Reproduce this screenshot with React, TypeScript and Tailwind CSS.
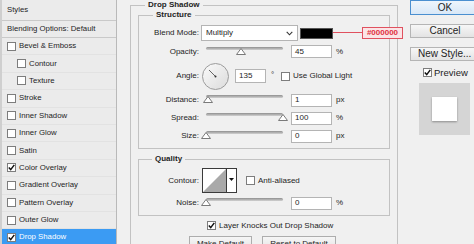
import React from 'react';

const Check = ({ checked, className = '' }: { checked?: boolean; className?: string }) => (
  <span className={`flex h-[9px] w-[9px] shrink-0 items-center justify-center border border-[#7d7d7d] bg-white ${className}`}>
    {checked && (
      <svg width="7" height="7" viewBox="0 0 7 7">
        <path d="M0.8 3.6 L2.7 5.6 L6.3 0.9" stroke="#111" strokeWidth="1.5" fill="none" />
      </svg>
    )}
  </span>
);

const Slider = ({ value }: { value: number }) => (
  <div className="relative ml-[7px] h-[12px] w-[77px] shrink-0">
    <div className="absolute left-0 right-0 top-[1px] h-[3px] rounded-full bg-gradient-to-b from-[#8f8f8f] to-[#d2d2d2]" />
    <svg className="absolute top-[2px]" style={{ left: (value * 77) / 100 - 5 }} width="10" height="7" viewBox="0 0 10 7">
      <path d="M5 0.5 L9.5 6.5 L0.5 6.5 Z" fill="#fff" stroke="#7a7a7a" />
    </svg>
  </div>
);

const NumField = ({ value, unit, w = 'w-[41px]' }: { value: string; unit?: string; w?: string }) => (
  <>
    <div className={`ml-[8px] flex h-[13px] ${w} shrink-0 items-center border border-[#b4b4b4] bg-white pl-[3px]`}>{value}</div>
    {unit && <span className="ml-[4px]">{unit}</span>}
  </>
);

const Label = ({ children }: { children: React.ReactNode }) => (
  <span className="w-[60px] shrink-0 text-right">{children}</span>
);

const styles: { name: string; checked?: boolean; indent?: boolean; active?: boolean }[] = [
  { name: 'Bevel & Emboss' },
  { name: 'Contour', indent: true },
  { name: 'Texture', indent: true },
  { name: 'Stroke' },
  { name: 'Inner Shadow' },
  { name: 'Inner Glow' },
  { name: 'Satin' },
  { name: 'Color Overlay', checked: true },
  { name: 'Gradient Overlay' },
  { name: 'Pattern Overlay' },
  { name: 'Outer Glow' },
  { name: 'Drop Shadow', checked: true, active: true },
];

export default function App() {
  return (
    <div className="relative flex h-[244px] w-[474px] overflow-hidden bg-[#f0f0f0] font-['Liberation_Sans',Arial,sans-serif] text-[8px] leading-[10px] text-[#1e1e1e]">
      {/* styles list */}
      <div className="flex w-[117px] shrink-0 bg-[#cfcfcf] pl-[2px]">
        <div className="flex flex-1 flex-col border-r border-[#b9b9b9] bg-[#ebebeb] text-[7.8px]">
          <div className="flex h-[21px] shrink-0 items-center border-b border-[#c9c9c9] pl-[5px]">Styles</div>
          <div className="flex h-[17px] shrink-0 items-center border-b border-[#c9c9c9] pl-[5px]">Blending Options: Default</div>
          {styles.map((s) => (
            <div
              key={s.name}
              className={`flex h-[17.4px] shrink-0 items-center border-b border-[#e2e2e2] ${s.indent ? 'pl-[15px]' : 'pl-[5px]'} ${s.active ? 'bg-[#3b9bf3] text-white' : ''}`}
            >
              <Check checked={s.checked} />
              <span className="ml-[3px]">{s.name}</span>
            </div>
          ))}
        </div>
      </div>

      {/* settings */}
      <fieldset className="ml-[13px] h-[260px] w-[268px] shrink-0 border border-[#c2c2c2] px-[7px]">
        <legend className="ml-[7px] px-[3px] font-bold">Drop Shadow</legend>

        <fieldset className="w-[252px] border border-[#c2c2c2] pb-[3px]">
          <legend className="ml-[14px] px-[3px] font-bold">Structure</legend>
          <div className="mt-[4px] flex h-[18px] items-center">
            <Label>Blend Mode:</Label>
            <div className="ml-[2px] flex h-[16px] w-[97px] shrink-0 items-center justify-between border border-[#b4b4b4] bg-white pl-[4px] pr-[4px]">
              <span>Multiply</span>
              <svg width="7" height="5" viewBox="0 0 7 5">
                <path d="M0.7 0.8 L3.5 3.8 L6.3 0.8" stroke="#333" strokeWidth="1.1" fill="none" />
              </svg>
            </div>
            <div className="ml-[2px] h-[11px] w-[33px] shrink-0 border border-[#555] bg-black" />
          </div>
          <div className="flex h-[19px] items-center">
            <Label>Opacity:</Label>
            <Slider value={45} />
            <NumField value="45" unit="%" />
          </div>
          <div className="flex h-[30px] items-center">
            <Label>Angle:</Label>
            <div className="relative ml-[3px] h-[27px] w-[27px] shrink-0 rounded-full border border-[#9c9c9c] bg-gradient-to-br from-[#fafafa] to-[#dcdcdc]">
              <svg className="absolute inset-0" width="25" height="25" viewBox="0 0 25 25">
                <line x1="12.5" y1="12.5" x2="6" y2="6" stroke="#555" strokeWidth="0.9" />
                <circle cx="12.5" cy="12.5" r="1" fill="#333" />
              </svg>
            </div>
            <div className="ml-[6px] flex h-[14px] w-[31px] shrink-0 items-center border border-[#b4b4b4] bg-white pl-[3px]">135</div>
            <span className="ml-[5px] w-[10px] self-start pt-[9px]">°</span>
            <Check className="ml-[0px]" />
            <span className="ml-[3px]">Use Global Light</span>
          </div>
          <div className="flex h-[18px] items-center">
            <Label>Distance:</Label>
            <Slider value={2} />
            <NumField value="1" unit="px" />
          </div>
          <div className="flex h-[18px] items-center">
            <Label>Spread:</Label>
            <Slider value={100} />
            <NumField value="100" unit="%" />
          </div>
          <div className="flex h-[18px] items-center">
            <Label>Size:</Label>
            <Slider value={0} />
            <NumField value="0" unit="px" />
          </div>
        </fieldset>

        <fieldset className="mt-[5px] w-[252px] border border-[#c2c2c2] pb-[3px]">
          <legend className="ml-[13px] px-[3px] font-bold">Quality</legend>
          <div className="mt-[3px] flex h-[27px] items-center">
            <Label>Contour:</Label>
            <div className="ml-[3px] flex h-[25px] w-[35px] shrink-0 border border-[#3a3a3a] bg-white">
              <svg width="23" height="23" viewBox="0 0 23 23">
                <path d="M0 23 L23 0 L23 23 Z" fill="#a9a9a9" />
              </svg>
              <div className="flex flex-1 justify-center border-l border-[#3a3a3a] pt-[9px]">
                <svg width="5" height="3" viewBox="0 0 5 3">
                  <path d="M0 0 L5 0 L2.5 3 Z" fill="#111" />
                </svg>
              </div>
            </div>
            <Check className="ml-[9px]" />
            <span className="ml-[3px]">Anti-aliased</span>
          </div>
          <div className="flex h-[18px] items-center">
            <Label>Noise:</Label>
            <Slider value={0} />
            <NumField value="0" unit="%" />
          </div>
        </fieldset>

        <div className="flex h-[17px] items-center pl-[69px] mt-[1px]">
          <Check checked />
          <span className="ml-[3px]">Layer Knocks Out Drop Shadow</span>
        </div>
        <div className="mt-[2px] flex pl-[51px]">
          <button className="h-[16px] w-[63px] border border-[#adadad] bg-gradient-to-b from-[#f6f6f6] to-[#e2e2e2] text-[8px]">Make Default</button>
          <button className="ml-[10px] h-[16px] w-[74px] border border-[#adadad] bg-gradient-to-b from-[#f6f6f6] to-[#e2e2e2] text-[8px]">Reset to Default</button>
        </div>
      </fieldset>

      {/* buttons + preview */}
      <div className="ml-[12px] flex w-[70px] shrink-0 flex-col text-[10px] leading-[12px]">
        <button className="h-[15px] w-full border border-[#4a8fd0] bg-gradient-to-b from-[#eef5fc] to-[#d9e8f7]">OK</button>
        <button className="mt-[9px] h-[14px] w-full border border-[#b5b5b5] bg-gradient-to-b from-[#f7f7f7] to-[#e3e3e3]">Cancel</button>
        <button className="mt-[9px] h-[14px] w-full border border-[#b5b5b5] bg-gradient-to-b from-[#f7f7f7] to-[#e3e3e3] text-left pl-[7px]">New Style...</button>
        <div className="mt-[6px] flex h-[11px] items-center pl-[13px] text-[9.5px]">
          <Check checked />
          <span className="ml-[2px]">Preview</span>
        </div>
        <div className="ml-[9px] mt-[5px] flex h-[52px] w-[51px] items-center justify-center bg-[#d5d5d5]">
          <div className="h-[24px] w-[25px] bg-white shadow-[0_1px_2px_rgba(0,0,0,0.35)]" />
        </div>
      </div>

      {/* hex annotation */}
      <div className="absolute left-[333px] top-[32px] h-px w-[29px] bg-[#e0515f]" />
      <div className="absolute left-[362px] top-[27px] flex h-[12px] w-[41px] items-center justify-center border border-[#e0515f] bg-[#fbe4e6] font-bold text-[#e0303f]">
        #000000
      </div>
    </div>
  );
}
